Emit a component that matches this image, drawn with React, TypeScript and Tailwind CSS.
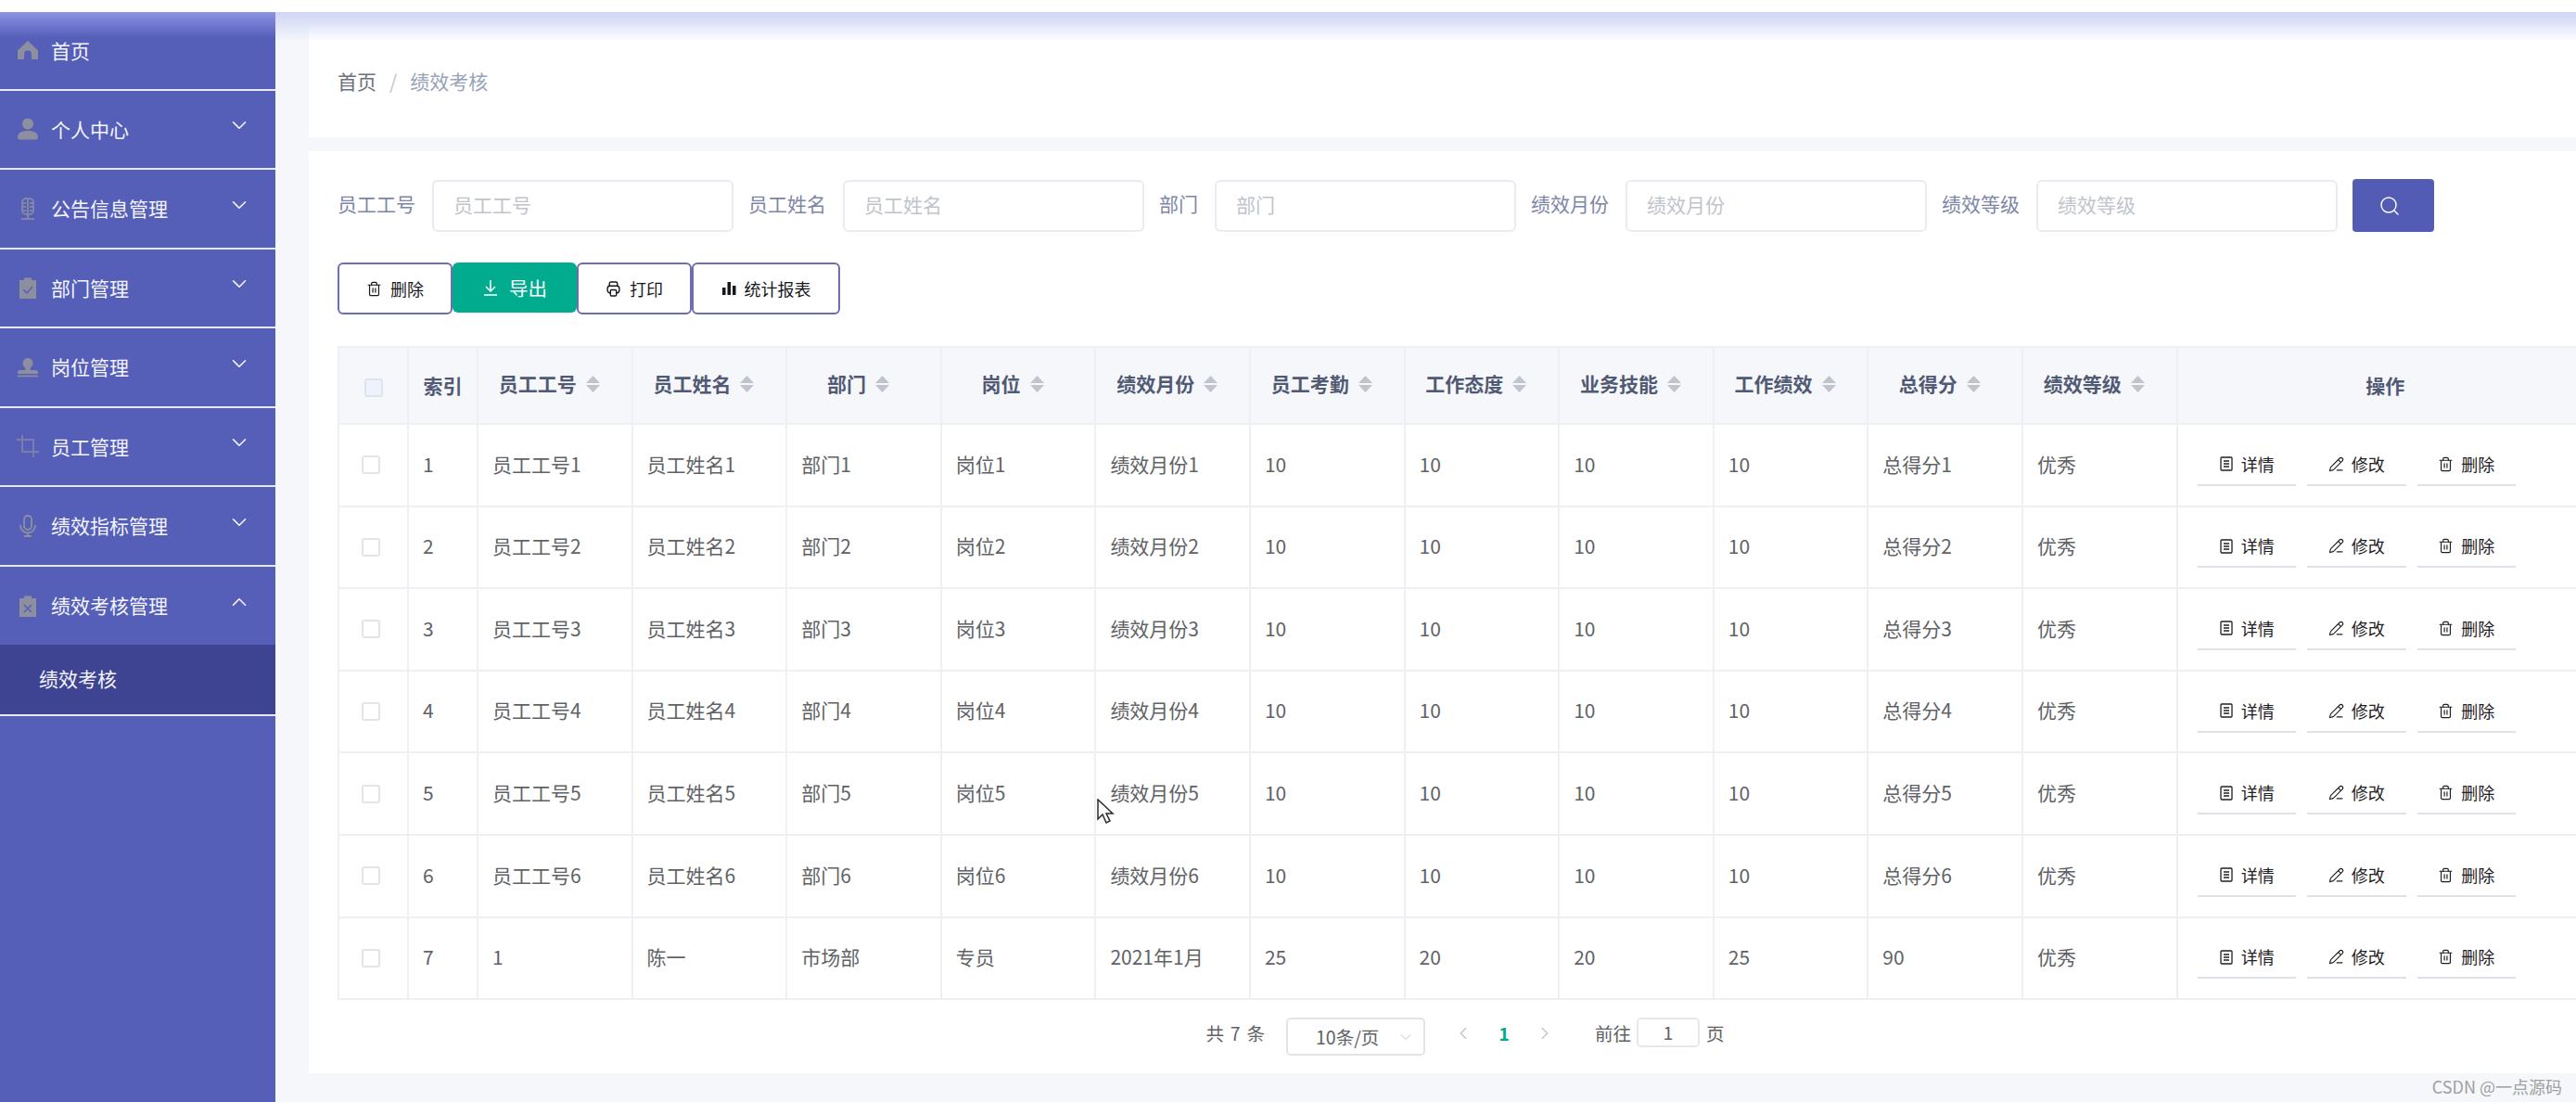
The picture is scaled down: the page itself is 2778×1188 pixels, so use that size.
import { ChevronDown, ChevronLeft, ChevronRight, ChevronUp, PencilLine, Search, Trash2 } from "lucide-react"
import type { ReactNode } from "react"

const iconCls = "h-[24px] w-[24px] shrink-0"

function HomeIcon() {
  return (
    <svg viewBox="0 0 24 24" className={iconCls} fill="#8d8f9f">
      <path d="M12 2 1 12.5V22h7v-5.5a4 4 0 0 1 8 0V22h7v-9.5z" />
    </svg>
  )
}

function UserIcon() {
  return (
    <svg viewBox="0 0 24 24" className={iconCls} fill="#8d8f9f">
      <circle cx="12" cy="6.5" r="6" />
      <path d="M1 21c0-4.5 4-7 11-7s11 2.500 11 7c0 1.500-1 2.500-2.500 2.500h-17C2 23.500 1 22.500 1 21z" />
    </svg>
  )
}

function MicLinesIcon() {
  return (
    <svg viewBox="0 0 24 24" className={iconCls} fill="none" stroke="#8285a5" strokeWidth="2">
      <rect x="6" y="1" width="12" height="17" rx="4" />
      <path d="M6 6h4M14 6h4M6 10h4M14 10h4M6 14h4M14 14h4M12 1v17M12 18v5M5 23h14" />
    </svg>
  )
}

function ClipboardIcon({ mark }: { mark: "check" | "x" }) {
  return (
    <svg viewBox="0 0 24 24" className={iconCls} fill="#8d8f9f">
      <path d="M3 4h5V1.500h8V4h5v20H3z" />
      {mark === "check" ? (
        <path d="m7 14 4 4 6-7" fill="none" stroke="#555fb8" strokeWidth="1.500" />
      ) : (
        <path d="m8 11 8 8M16 11l-8 8" fill="none" stroke="#555fb8" strokeWidth="1.500" />
      )}
    </svg>
  )
}

function StampIcon() {
  return (
    <svg viewBox="0 0 24 24" className={iconCls} fill="#8d8f9f">
      <path d="M12 2a5.500 5.500 0 0 0-3.500 9.700c.8.8 1 1.800 1 3.300H4a3 3 0 0 0-3 3v1h22v-1a3 3 0 0 0-3-3h-5.500c0-1.500.2-2.500 1-3.300A5.500 5.500 0 0 0 12 2z" />
      <rect x="1" y="20.500" width="22" height="1.800" />
    </svg>
  )
}

function CropIcon() {
  return (
    <svg viewBox="0 0 24 24" className={iconCls} fill="none" stroke="#7b7eab" strokeWidth="2">
      <path d="M6 0v18h18M0 5h18v19" />
    </svg>
  )
}

function MicIcon() {
  return (
    <svg viewBox="0 0 24 24" className={iconCls} fill="none" stroke="#8d8f9f" strokeWidth="1.800">
      <rect x="8" y="1" width="8" height="15" rx="4" />
      <path d="M4 11c0 5 3.500 8.500 8 8.500s8-3.500 8-8.500M12 19.500V23M8 23h8" />
    </svg>
  )
}

const menus: { label: string; icon: ReactNode; open?: boolean }[] = [
  { label: "个人中心", icon: <UserIcon /> },
  { label: "公告信息管理", icon: <MicLinesIcon /> },
  { label: "部门管理", icon: <ClipboardIcon mark="check" /> },
  { label: "岗位管理", icon: <StampIcon /> },
  { label: "员工管理", icon: <CropIcon /> },
  { label: "绩效指标管理", icon: <MicIcon /> },
]

function Sidebar() {
  return (
    <aside className="w-[297px] shrink-0 bg-[#555fb8] text-[21px] text-[#f3f4fc]">
      <div className="flex h-[84.5px] items-center gap-[13px] border-b-2 border-[#e6e8f6] bg-[linear-gradient(#8a93e4,#555fb8_28px)] pl-[18px]">
        <HomeIcon />
        <span>首页</span>
      </div>
      {menus.map((m) => (
        <div key={m.label} className="flex h-[85.5px] items-center gap-[13px] border-b-2 border-[#e6e8f6] pl-[18px]">
          {m.icon}
          <span>{m.label}</span>
          <ChevronDown size={26} strokeWidth={1.5} className="mr-[26px] ml-auto -translate-y-[4px]" />
        </div>
      ))}
      <div className="flex h-[84px] items-center gap-[13px] pl-[18px]">
        <ClipboardIcon mark="x" />
        <span>绩效考核管理</span>
        <ChevronUp size={26} strokeWidth={1.5} className="mr-[26px] ml-auto -translate-y-[4px]" />
      </div>
      <div className="flex h-[77px] items-center border-b-2 border-[#e6e8f6] bg-[#3e4491] pl-[42px]">绩效考核</div>
    </aside>
  )
}

function Field({ label }: { label: string }) {
  return (
    <div className="flex items-center gap-[18px]">
      <span className="-translate-y-[2px] text-[#7d86a8]">{label}</span>
      <input
        placeholder={label}
        className="h-[56px] w-[325px] rounded-[6px] border-2 border-[#e9ebf3] bg-white pb-[4px] pl-[21px] outline-none placeholder:text-[#c0c4cc]"
      />
    </div>
  )
}

function DocIcon() {
  return (
    <svg viewBox="0 0 16 16" className="h-[16px] w-[16px]" fill="none" stroke="currentColor" strokeWidth="1.300">
      <rect x="2" y="1" width="12" height="14" rx="1" />
      <path d="M5 5h6M5 8h6M5 11h6" />
    </svg>
  )
}

function PrintIcon() {
  return (
    <svg viewBox="0 0 16 16" className="h-[17px] w-[17px]" fill="none" stroke="currentColor" strokeWidth="1.300">
      <path d="M4 5V2.500A1.500 1.500 0 0 1 5.500 1h5A1.500 1.500 0 0 1 12 2.500V5" />
      <rect x="2" y="5" width="12" height="7" rx="2.500" />
      <rect x="5" y="9" width="6" height="6" rx="1" fill="#fff" />
    </svg>
  )
}

function BarsIcon() {
  return (
    <svg viewBox="0 0 16 16" className="h-[16px] w-[16px]" fill="currentColor">
      <rect x="1" y="7" width="3.500" height="8" />
      <rect x="6.500" y="1" width="3.500" height="14" />
      <rect x="12" y="5" width="3.500" height="10" />
    </svg>
  )
}

function DownloadIcon() {
  return (
    <svg viewBox="0 0 18 18" className="h-[18px] w-[18px]" fill="none" stroke="currentColor" strokeWidth="1.500">
      <path d="M9 1v11M4 8l5 5 5-5M2 17h14" />
    </svg>
  )
}

function ToolButton({ w, icon, children }: { w: string; icon: ReactNode; children: ReactNode }) {
  return (
    <button className={`flex h-[56px] items-center justify-center gap-[9px] rounded-[6px] border-2 border-[#6f6eab] bg-white text-[18px] text-[#17181c] ${w}`}>
      {icon}
      {children}
    </button>
  )
}

function SortCaret() {
  return (
    <svg viewBox="0 0 15 18" className="h-[18px] w-[15px] shrink-0" fill="#c0c4cc">
      <path d="M7.500 0 15 8H0zM0 10h15l-7.500 8z" />
    </svg>
  )
}

const columns = ["员工工号", "员工姓名", "部门", "岗位", "绩效月份", "员工考勤", "工作态度", "业务技能", "工作绩效", "总得分", "绩效等级"]

const rows = [
  ...[1, 2, 3, 4, 5, 6].map((n) => [`${n}`, `员工工号${n}`, `员工姓名${n}`, `部门${n}`, `岗位${n}`, `绩效月份${n}`, "10", "10", "10", "10", `总得分${n}`, "优秀"]),
  ["7", "1", "陈一", "市场部", "专员", "2021年1月", "25", "20", "20", "25", "90", "优秀"],
]

const cellCls = "border-2 border-[#eef0f6]"

function OpButton({ icon, label }: { icon: ReactNode; label: string }) {
  return (
    <button className="flex h-[45px] w-[106.5px] items-center justify-center gap-[8px] border-b-2 border-[#dfe1e8] text-[18px] text-[#1f2024]">
      {icon}
      {label}
    </button>
  )
}

function DataTable() {
  return (
    <table className="w-[2432px] table-fixed border-collapse text-[#606266]">
      <colgroup>
        <col className="w-[75px]" />
        <col className="w-[75px]" />
        {columns.map((c) => (
          <col key={c} className="w-[166.6px]" />
        ))}
        <col />
      </colgroup>
      <thead>
        <tr className="h-[83px] bg-[#f6f7fa] font-semibold text-[#515a75]">
          <th className={cellCls}>
            <span className="ml-[1px] inline-block h-[20px] w-[20px] rounded-[3px] border-2 border-[#dfe3ee] bg-[#edf2fc] align-middle" />
          </th>
          <th className={`${cellCls} font-semibold`}>索引</th>
          {columns.map((c) => (
            <th key={c} className={`${cellCls} pr-[12px] font-semibold`}>
              <span className="flex -translate-y-[2px] items-center justify-center gap-[10px]">
                {c}
                <SortCaret />
              </span>
            </th>
          ))}
          <th className={`${cellCls} pl-[2px] font-semibold`}>操作</th>
        </tr>
      </thead>
      <tbody>
        {rows.map((r) => (
          <tr key={r[0]} className="h-[88.6px]">
            <td className={cellCls}>
              <span className="ml-[24px] block h-[20px] w-[20px] rounded-[3px] border-2 border-[#e2e4ea] bg-white" />
            </td>
            {r.map((v, i) => (
              <td key={i} className={`${cellCls} px-[15px] pb-[2px]`}>
                {v}
              </td>
            ))}
            <td className={cellCls}>
              <div className="flex gap-[12px] pl-[21px]">
                <OpButton icon={<DocIcon />} label="详情" />
                <OpButton icon={<PencilLine size={17} strokeWidth={1.6} />} label="修改" />
                <OpButton icon={<Trash2 size={17} strokeWidth={1.7} />} label="删除" />
              </div>
            </td>
          </tr>
        ))}
      </tbody>
    </table>
  )
}

function Pagination() {
  return (
    <div className="mt-[19px] flex w-[2432px] items-start justify-center text-[19.5px] leading-[34px] text-[#606266]">
      <span className="mr-[23px] [word-spacing:2.5px]">共 7 条</span>
      <div className="flex h-[41px] w-[150px] items-center justify-between rounded-[5px] border-2 border-[#e2e4ea] pr-[9px] pl-[30px]">
        10条/页
        <ChevronDown size={20} strokeWidth={1} className="text-[#b5b9c2]" />
      </div>
      <div className="ml-[19px] flex h-[34px] items-center text-[#c0c4cc]">
        <ChevronLeft size={22} strokeWidth={1.5} className="mx-[11px]" />
        <span className="w-[44px] text-center font-bold text-[#00ab8e]">1</span>
        <ChevronRight size={22} strokeWidth={1.5} className="mx-[11px]" />
      </div>
      <span className="mr-[6px] ml-[32px]">前往</span>
      <div className="flex h-[32px] w-[68px] items-center justify-center rounded-[5px] border-2 border-[#e6e8ee]">1</div>
      <span className="ml-[7px]">页</span>
    </div>
  )
}

export default function App() {
  return (
    <div className="relative h-[1188px] w-[2778px] overflow-hidden bg-white font-['Noto_Sans_CJK_SC',sans-serif] text-[21px]">
      <div className="h-[13px]" />
      <div className="flex h-[1175px]">
        <Sidebar />
        <main className="relative min-w-0 flex-1 bg-[#f5f7fa] pt-[15px] pl-[36px]">
          <div className="flex h-[120px] items-center gap-[14px] bg-white pl-[31px]">
            <span className="text-[#6d7079]">首页</span>
            <span className="text-[#c0c4cc]">/</span>
            <span className="text-[#97a3b8]">绩效考核</span>
          </div>
          <section className="mt-[15px] h-[994px] overflow-hidden bg-white pt-[30px] pl-[31px]">
            <div className="flex items-center gap-[16px]">
              <Field label="员工工号" />
              <Field label="员工姓名" />
              <Field label="部门" />
              <Field label="绩效月份" />
              <Field label="绩效等级" />
              <button className="flex h-[57px] w-[88px] items-center justify-center rounded-[4px] bg-[#535cb4] pr-[8px] text-white">
                <Search size={24} strokeWidth={1.4} />
              </button>
            </div>
            <div className="mt-[33px] mb-[34px] flex items-start">
              <ToolButton w="w-[124px]" icon={<Trash2 size={17} strokeWidth={1.7} />}>
                删除
              </ToolButton>
              <button className="flex h-[54px] w-[134px] items-center justify-center gap-[11px] rounded-[6px] bg-[#00ab8e] text-[20.5px] text-white">
                <DownloadIcon />
                导出
              </button>
              <ToolButton w="w-[124px]" icon={<PrintIcon />}>
                打印
              </ToolButton>
              <ToolButton w="w-[160px]" icon={<BarsIcon />}>
                统计报表
              </ToolButton>
            </div>
            <DataTable />
            <Pagination />
          </section>
          <div className="pointer-events-none absolute top-0 right-0 left-0 h-[32px] bg-gradient-to-b from-[#d0d5f6] to-transparent" />
        </main>
      </div>
      <span className="absolute right-[15px] bottom-[3px] text-[18px] text-[#a0a0a0]">CSDN @一点源码</span>
      <svg viewBox="0 0 19 28" className="absolute top-[861px] left-[1183px] h-[28px] w-[19px]" fill="#fff" stroke="#2b2b2b" strokeWidth="1.500">
        <path d="M1 1v21l5-5 4 9 4-2-4-8h7z" />
      </svg>
    </div>
  )
}
